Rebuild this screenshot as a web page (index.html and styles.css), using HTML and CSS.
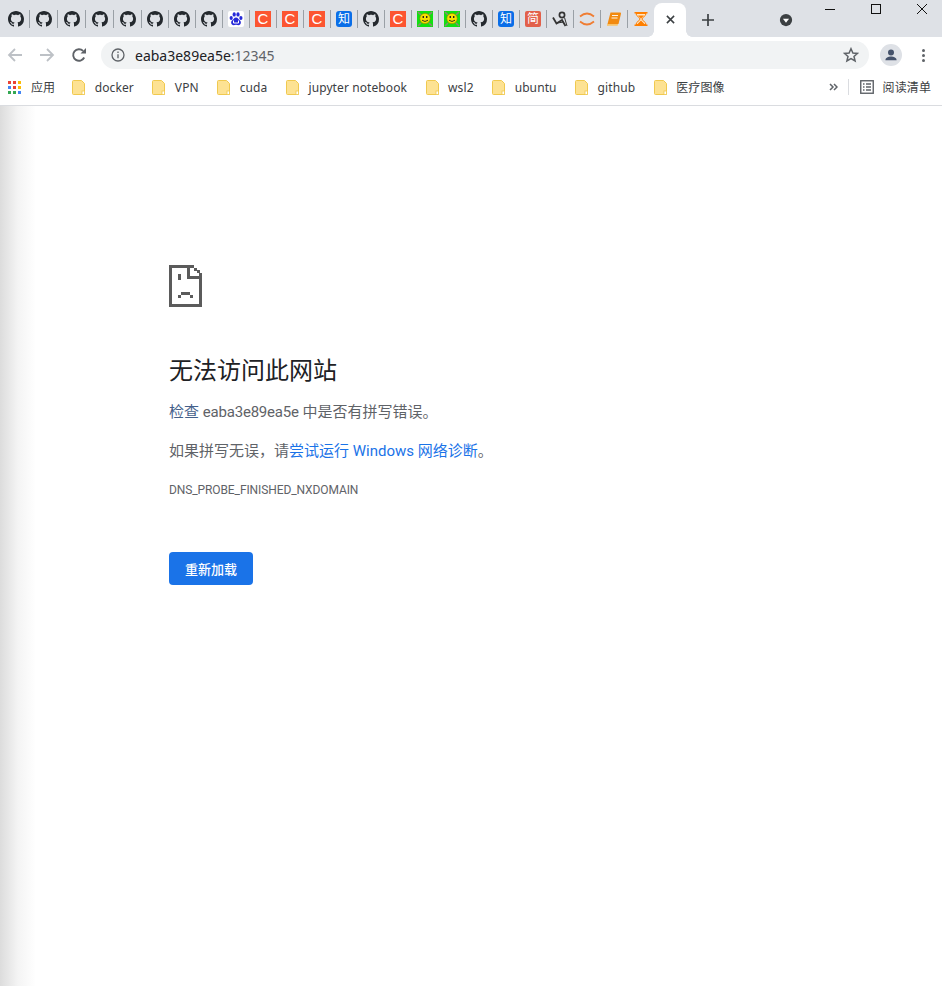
FILE: index.html
```html
<!DOCTYPE html>
<html lang="zh-CN">
<head>
<meta charset="utf-8">
<title>eaba3e89ea5e</title>
<link rel="stylesheet" href="styles.css">
</head>
<body>
<svg class="defs" width="0" height="0" aria-hidden="true">
  <symbol id="gh" viewBox="0 0 16 16"><path fill="#24292e" d="M8 0C3.58 0 0 3.58 0 8c0 3.54 2.29 6.53 5.47 7.59.4.07.55-.17.55-.38 0-.19-.01-.82-.01-1.49-2.01.37-2.53-.49-2.69-.94-.09-.23-.48-.94-.82-1.13-.28-.15-.68-.52-.01-.53.63-.01 1.08.58 1.23.82.72 1.21 1.87.87 2.33.66.07-.52.28-.87.51-1.07-1.78-.2-3.64-.89-3.64-3.95 0-.87.31-1.59.82-2.15-.08-.2-.36-1.02.08-2.12 0 0 .67-.21 2.2.82.64-.18 1.32-.27 2-.27.68 0 1.36.09 2 .27 1.53-1.04 2.2-.82 2.2-.82.44 1.1.16 1.92.08 2.12.51.56.82 1.27.82 2.15 0 3.07-1.87 3.75-3.65 3.95.29.25.54.73.54 1.48 0 1.07-.01 1.93-.01 2.2 0 .21.15.46.55.38A8.013 8.013 0 0016 8c0-4.42-3.58-8-8-8z"/></symbol>
  <symbol id="smile" viewBox="0 0 16 16">
    <rect width="16" height="16" fill="#12e012"/>
    <path d="M1 1l3 3M15 1l-3 3M1 15l3-3M15 15l-3-3" stroke="#8a8a70" stroke-width="1.6"/>
    <circle cx="8" cy="7.5" r="5.2" fill="#f6e000" stroke="#8a7a00" stroke-width=".6"/>
    <rect x="5.6" y="5" width="1.4" height="2" fill="#222"/><rect x="9" y="5" width="1.4" height="2" fill="#222"/>
    <path d="M5 9.2q3 2.6 6 0" fill="none" stroke="#222" stroke-width=".9"/>
  </symbol>
  <symbol id="folder" viewBox="0 0 13 15">
    <path d="M1.5.5h8l3 3v11h-11a1 1 0 0 1-1-1v-12a1 1 0 0 1 1-1z" fill="#fde293" stroke="#f0c94f"/>
    <rect x="10" y="11" width="2.500" height="3.500" fill="#fff" stroke="#f0c94f" stroke-width=".8"/>
  </symbol>
</svg>

<header class="chrome">
  <div class="tabstrip">
    <div class="tabs">
      <div class="tab wide"><svg class="fav"><use href="#gh"/></svg></div>
      <div class="tab wide"><svg class="fav"><use href="#gh"/></svg></div>
      <div class="tab wide"><svg class="fav"><use href="#gh"/></svg></div>
      <div class="tab wide"><svg class="fav"><use href="#gh"/></svg></div>
      <div class="tab wide"><svg class="fav"><use href="#gh"/></svg></div>
      <div class="tab"><svg class="fav"><use href="#gh"/></svg></div>
      <div class="tab"><svg class="fav"><use href="#gh"/></svg></div>
      <div class="tab"><svg class="fav"><use href="#gh"/></svg></div>
      <div class="tab">
        <svg class="fav" viewBox="0 0 16 16">
          <rect width="16" height="16" rx="2" fill="#fff"/>
          <g fill="#2529d8">
            <ellipse cx="3.2" cy="7" rx="1.6" ry="2.1"/><ellipse cx="6.2" cy="3.4" rx="1.6" ry="2.2"/><ellipse cx="10" cy="3.4" rx="1.6" ry="2.2"/><ellipse cx="12.9" cy="7" rx="1.6" ry="2.1"/>
            <path d="M8 6.4c-2 0-2.6 2-4 3.2-1.500 1.300-1 4.600 1.500 4.600 1 0 1.600-.4 2.500-.4s1.500.4 2.500.4c2.500 0 3-3.300 1.500-4.600C10.600 8.400 10 6.400 8 6.400z"/>
          </g>
          <path d="M5.500 9.500v2.500h5V9.500" fill="none" stroke="#fff" stroke-width="1"/>
        </svg>
      </div>
      <div class="tab"><span class="fav-text csdn">C</span></div>
      <div class="tab"><span class="fav-text csdn">C</span></div>
      <div class="tab"><span class="fav-text csdn">C</span></div>
      <div class="tab"><span class="fav-text zhi">知</span></div>
      <div class="tab"><svg class="fav"><use href="#gh"/></svg></div>
      <div class="tab"><span class="fav-text csdn">C</span></div>
      <div class="tab"><svg class="fav"><use href="#smile"/></svg></div>
      <div class="tab"><svg class="fav"><use href="#smile"/></svg></div>
      <div class="tab"><svg class="fav"><use href="#gh"/></svg></div>
      <div class="tab"><span class="fav-text zhi">知</span></div>
      <div class="tab"><span class="fav-text jian">简</span></div>
      <div class="tab">
        <svg class="fav" viewBox="0 0 16 16" fill="none" stroke="#333">
          <circle cx="10" cy="4" r="2.600" stroke-width="1.700"/>
          <path d="M1 6.500l3.500 6L10 9l3.500 6" stroke-width="1.800"/>
          <path d="M12.500 6.500L15 15M5 12l7-1" stroke-width="1"/>
        </svg>
      </div>
      <div class="tab">
        <svg class="fav" viewBox="0 0 16 16" fill="none" stroke="#ef7d33" stroke-width="1.700">
          <path d="M1 5.500Q8 -.5 15 5.500M1 10.500Q8 16.500 15 10.500"/>
        </svg>
      </div>
      <div class="tab">
        <svg class="fav" viewBox="0 0 16 16">
          <path d="M4.500 1.500h9.500a1 1 0 0 1 1 1.200l-2.500 10.300H1.500z" fill="#f28a10"/>
          <path d="M1.500 13h10.500l-.4 1.800H2.500a1 1 0 0 1-1-1.800z" fill="#f9c36a"/>
          <path d="M6 4.500h6M5.500 7h6" stroke="#fff" stroke-width=".9"/>
        </svg>
      </div>
      <div class="tab last">
        <svg class="fav" viewBox="0 0 16 16">
          <path d="M1.500 1h13v1.500h-13zM1.500 13.500h13V15h-13z" fill="#ff7f00"/>
          <path d="M3 2.500h10c0 3-4 3.500-4 5.500s4 2.500 4 5.500H3c0-3 4-3.500 4-5.500S3 5.500 3 2.500z" fill="#ffe6c4" stroke="#ff7f00" stroke-width="1"/>
          <path d="M5 4.500h6L8 7.500zM4.500 13L8 9.500l3.500 3.500z" fill="#ff7f00"/>
        </svg>
      </div>
    </div>
    <div class="tab-active">
      <svg class="close" viewBox="0 0 10 10"><path d="M1 1l8 8M9 1l-8 8"/></svg>
    </div>
    <svg class="newtab" viewBox="0 0 12 12"><path d="M6 0v12M0 6h12"/></svg>
    <svg class="tabsearch" viewBox="0 0 16 16"><circle cx="8" cy="8" r="7" fill="#3c4043"/><path d="M4.500 6.500h7L8 11z" fill="#fff"/></svg>
    <div class="winctl">
      <svg class="win" viewBox="0 0 10 10"><path d="M0 5.500h10"/></svg>
      <svg class="win" viewBox="0 0 10 10"><rect x=".5" y=".5" width="9" height="9"/></svg>
      <svg class="win" viewBox="0 0 10 10"><path d="M0 0l10 10M10 0L0 10"/></svg>
    </div>
  </div>

  <div class="toolbar">
    <svg class="nav dim" viewBox="0 0 16 16"><path d="M15 8H2M8 2L2 8l6 6"/></svg>
    <svg class="nav dim" viewBox="0 0 16 16"><path d="M1 8h13M8 2l6 6-6 6"/></svg>
    <svg class="nav reload" viewBox="0 0 16 16"><path d="M13.200 10.500A5.800 5.800 0 1 1 12.100 3.900"/><path class="solid" d="M15 1v5.500H9.500z"/></svg>
    <div class="omnibox">
      <svg class="info" viewBox="0 0 14 14"><circle cx="7" cy="7" r="6"/><path d="M7 6.200v4M7 3.400v1.500"/></svg>
      <div class="url"><span class="host">eaba3e89ea5e</span>:12345</div>
      <svg class="star" viewBox="0 0 16 16"><path d="M8 1.700l1.900 4.300 4.600.4-3.500 3 1.100 4.600L8 11.600 3.900 14l1.100-4.600-3.500-3 4.600-.4z"/></svg>
    </div>
    <div class="avatar">
      <svg viewBox="0 0 24 24"><circle cx="12" cy="8.500" r="4"/><path d="M4.500 19c0-3.300 4-5 7.500-5s7.500 1.700 7.500 5z"/></svg>
    </div>
    <div class="menu"><i></i><i></i><i></i></div>
  </div>

  <nav class="bookmarks">
    <div class="bm apps">
      <span class="grid">
        <i class="r"></i><i class="r"></i><i class="y"></i>
        <i class="b"></i><i class="r"></i><i class="y"></i>
        <i class="g"></i><i class="g"></i><i class="b"></i>
      </span>
      <span>应用</span>
    </div>
    <div class="bm"><svg class="fld"><use href="#folder"/></svg><span>docker</span></div>
    <div class="bm"><svg class="fld"><use href="#folder"/></svg><span>VPN</span></div>
    <div class="bm"><svg class="fld"><use href="#folder"/></svg><span>cuda</span></div>
    <div class="bm"><svg class="fld"><use href="#folder"/></svg><span>jupyter notebook</span></div>
    <div class="bm"><svg class="fld"><use href="#folder"/></svg><span>wsl2</span></div>
    <div class="bm"><svg class="fld"><use href="#folder"/></svg><span>ubuntu</span></div>
    <div class="bm"><svg class="fld"><use href="#folder"/></svg><span>github</span></div>
    <div class="bm"><svg class="fld"><use href="#folder"/></svg><span>医疗图像</span></div>
    <div class="bm-right">
      <svg class="chev" viewBox="0 0 9 8"><path d="M1 1l3 3-3 3M5 1l3 3-3 3"/></svg>
      <span class="vsep"></span>
      <svg class="reader" viewBox="0 0 14 14"><rect x=".75" y=".75" width="12.500" height="12.500"/><path d="M3 4h1.500M6 4h5M3 7h1.500M6 7h5M3 10h1.500M6 10h5"/></svg>
      <span>阅读清单</span>
    </div>
  </nav>
</header>

<main class="page">
  <div class="content">
    <svg class="sad" viewBox="0 0 33 42" shape-rendering="crispEdges">
      <path fill="#5b5b5b" d="M0 0h25v3H3v36h27V8h3v34H0zM18 0h3v11h12v3H18zM25 3h3v3h-3zM28 5h3v3h-3zM9 9h3v6H9zM12 27h9v3h-9zM9 30h3v3H9zM21 30h3v3h-3z"/>
    </svg>
    <h1 class="title">无法访问此网站</h1>
    <p class="line"><span class="accent">检查</span> <span class="site">eaba3e89ea5e</span> 中是否有拼写错误。</p>
    <p class="line second">如果拼写无误，请<a class="link">尝试运行 Windows 网络诊断</a>。</p>
    <div class="code">DNS_PROBE_FINISHED_NXDOMAIN</div>
    <button class="reload-btn">重新加载</button>
  </div>
</main>
</body>
</html>
```

FILE: styles.css
```css
* { box-sizing: border-box; }
html, body { margin: 0; padding: 0; height: 100%; }
body {
  width: 942px;
  height: 986px;
  overflow: hidden;
  background: #fff;
  font-family: "Noto Sans", "Noto Sans CJK SC", sans-serif;
  display: flex;
  flex-direction: column;
}
.defs { position: absolute; }
svg { display: block; flex: none; }

/* tab strip */
.tabstrip {
  height: 37px;
  background: #dee1e6;
  display: flex;
  align-items: stretch;
  padding-left: 2px;
  position: relative;
}
.tabs { display: flex; flex: none; padding-top: 10px; height: 37px; }
.tab {
  width: 27px;
  flex: none;
  height: 18px;
  display: flex;
  align-items: center;
  justify-content: center;
  border-right: 1px solid #9aa0a6;
}
.tab.wide { width: 28px; padding-left: 1px; }
.tab.last { width: 25px; border-right: none; }
.fav { width: 16px; height: 16px; }
.fav-text {
  width: 16px;
  height: 16px;
  display: flex;
  align-items: center;
  justify-content: center;
  color: #fff;
  line-height: 16px;
}
.csdn { background: #fc5531; font-size: 15px; font-family: "Liberation Sans", sans-serif; }
.zhi { background: #0a6ee8; font-size: 12px; border-radius: 3px; }
.jian { background: #e2604a; font-size: 12px; border-radius: 2px; }

.tab-active {
  width: 32px;
  height: 34px;
  margin-top: 3px;
  margin-left: 1px;
  background: #fff;
  border-radius: 8px 8px 0 0;
  display: flex;
  align-items: center;
  justify-content: center;
  padding-bottom: 2px;
  position: relative;
}
.tab-active::before,
.tab-active::after {
  content: "";
  position: absolute;
  bottom: 0;
  width: 6px;
  height: 6px;
}
.tab-active::before {
  left: -6px;
  background: radial-gradient(circle at 0 0, #dee1e6 5.500px, #fff 6px);
}
.tab-active::after {
  right: -6px;
  background: radial-gradient(circle at 100% 0, #dee1e6 5.500px, #fff 6px);
}
.close { width: 9px; height: 9px; stroke: #3c4043; stroke-width: 1.700; fill: none; }
.newtab { width: 12px; height: 12px; margin: 14px 0 0 16px; stroke: #3c4043; stroke-width: 1.700; fill: none; }
.tabsearch { width: 14px; height: 14px; margin: 13px 0 0 65px; }
.winctl { display: flex; margin-left: 32px; gap: 36px; padding-top: 4px; }
.win { width: 10px; height: 10px; stroke: #111; stroke-width: 1; fill: none; }

/* toolbar */
.toolbar {
  height: 32px;
  background: #fff;
  display: flex;
  align-items: center;
  padding: 4px 0 0 7px;
}
.nav { width: 16px; height: 16px; fill: none; stroke: #5f6368; stroke-width: 1.800; }
.nav.dim { stroke: #bdc1c6; margin-right: 16px; }
.reload { margin-right: 14px; stroke-width: 1.900; }
.reload .solid { fill: #5f6368; stroke: none; }
.omnibox {
  width: 768px;
  height: 28px;
  background: #f1f3f4;
  border-radius: 14px;
  display: flex;
  align-items: center;
  padding: 0 10px;
}
.info { width: 14px; height: 14px; fill: none; stroke: #5f6368; stroke-width: 1.300; }
.url { margin-left: 10px; font-size: 14px; color: #5f6368; flex: 1; }
.host { color: #202124; }
.star { width: 16px; height: 16px; fill: none; stroke: #5f6368; stroke-width: 1.500; }
.avatar {
  width: 22px;
  height: 22px;
  margin-left: 11px;
  border-radius: 50%;
  background: #dee1e6;
  display: flex;
  align-items: center;
  justify-content: center;
}
.avatar svg { width: 18px; height: 18px; fill: #45526b; }
.menu {
  margin-left: 20px;
  display: flex;
  flex-direction: column;
  gap: 2px;
}
.menu i { width: 3px; height: 3px; border-radius: 50%; background: #5f6368; }

/* bookmarks */
.bookmarks {
  height: 37px;
  background: #fff;
  border-bottom: 1px solid #dadce0;
  display: flex;
  align-items: center;
  padding: 0 11px 0 8px;
  font-size: 12px;
  letter-spacing: .1px;
  color: #3c4043;
}
.bm { display: flex; align-items: center; margin-right: 18.500px; }
.apps { margin-right: 17px; }
.bm .fld { width: 13px; height: 15px; margin-right: 9.500px; }
.grid {
  display: grid;
  grid-template-columns: repeat(3, 3px);
  grid-auto-rows: 3px;
  gap: 2px;
  margin-right: 10px;
}
.grid i { display: block; }
.grid .r { background: #ea4335; }
.grid .y { background: #fbbc04; }
.grid .b { background: #4285f4; }
.grid .g { background: #34a853; }
.bm-right { display: flex; align-items: center; margin-left: auto; }
.chev { width: 9px; height: 8px; fill: none; stroke: #5f6368; stroke-width: 1.500; }
.vsep { width: 1px; height: 16px; background: #dadce0; margin: 0 11px 0 10px; }
.reader { width: 14px; height: 14px; margin-right: 9px; fill: none; stroke: #5f6368; stroke-width: 1.400; }

/* page */
.page {
  flex: 1;
  position: relative;
  padding: 159px 0 0 169px;
}
.page::before {
  content: "";
  position: absolute;
  left: 0;
  top: 0;
  bottom: 0;
  width: 36px;
  background: linear-gradient(to right, #dcdcdc, #f4f4f4 50%, #fff);
}
.content { position: relative; }
.sad { width: 33px; height: 42px; }
.title {
  margin: 47px 0 0;
  font-size: 24px;
  font-weight: 400;
  line-height: 32px;
  color: #202124;
}
.line {
  margin: 15px 0 0;
  font-family: Roboto, "Noto Sans CJK SC", sans-serif;
  font-size: 15px;
  line-height: 23px;
  color: #5f6368;
}
.line.second { margin-top: 16px; }
.accent { color: #44608a; }
.site { letter-spacing: -.2px; }
.link { color: #1a73e8; }
.code {
  margin-top: 19px;
  font-family: Roboto, "Noto Sans CJK SC", sans-serif;
  font-size: 12px;
  letter-spacing: -.1px;
  line-height: 16px;
  color: #5f6368;
}
.reload-btn {
  display: block;
  margin-top: 54px;
  width: 84px;
  height: 33px;
  border: none;
  border-radius: 4px;
  background: #1a73e8;
  color: #fff;
  font: 500 13px "Noto Sans", "Noto Sans CJK SC", sans-serif;
}
```
